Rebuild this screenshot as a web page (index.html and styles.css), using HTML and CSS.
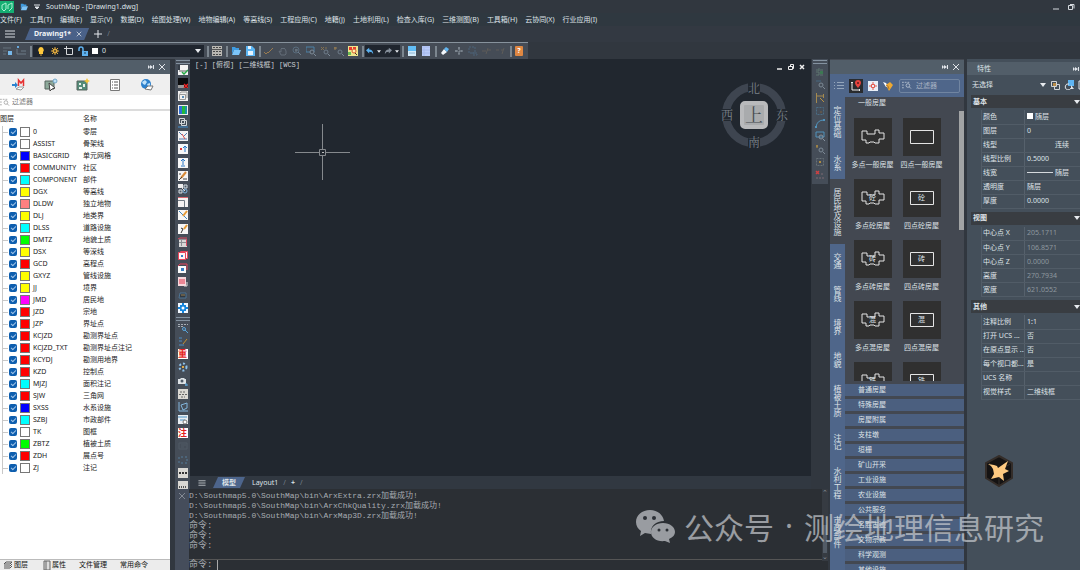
FILE: index.html
```html
<!DOCTYPE html>
<html lang="zh-CN">
<head>
<meta charset="utf-8">
<title>SouthMap - [Drawing1.dwg]</title>
<link rel="stylesheet" href="styles.css">
</head>
<body>
<svg class="defs" aria-hidden="true">
  <symbol id="folder" viewBox="0 0 10 10"><path d="M1 1h3l1 1h3v2H3L1 8z" fill="#3f9be0"/><path d="M3 4h7L8 9H1z" fill="#7cc4f8"/></symbol>
  <symbol id="down" viewBox="0 0 6 4"><path d="M0 0h6L3 4z" fill="#e8ebef"/></symbol>
  <symbol id="pin" viewBox="0 0 8 8"><path d="M1 2l2 2-2 2zM3 2l3 2-3 2zM6 2h1v4H6z" fill="#e3e7ec"/></symbol>
  <symbol id="cross" viewBox="0 0 8 8"><path d="M1 1l6 6M7 1L1 7" stroke="#dfe3e8" fill="none"/></symbol>
  <symbol id="bars" viewBox="0 0 10 8"><path d="M0 1h10M0 4h10M0 7h10" stroke="#d9dde2" fill="none"/></symbol>
  <symbol id="lens" viewBox="0 0 11 9"><path d="M0 1h9M0 4h3M0 7h3" stroke="currentColor" stroke-dasharray="2 1" fill="none"/><circle cx="6.500" cy="4.500" r="2" stroke="currentColor" fill="none"/><path d="M8 6l2 2" stroke="currentColor"/></symbol>
  <symbol id="multi" viewBox="0 0 24 16"><path d="M1 2h5v3h8V1h4v3h5v6h-5v4h-4l-1-1H9l-1 1H5v-3H1z" stroke="#e4e4e4" fill="none"/></symbol>
  <symbol id="quad" viewBox="0 0 24 16"><path d="M.5 1.500h23v13H.5z" stroke="#e4e4e4" fill="none"/></symbol>
</svg>
<div class="app">
  <header class="title">
    <svg class="logo" viewBox="0 0 14 12"><path d="M0 0h14v12H0z" fill="#14ae72"/><path d="M2 4l4-2v6l-2 2-2-2zM8 8V4l4-2v5l-3 3" fill="none" stroke="#a8f0d0"/></svg>
    <svg class="i10"><use href="#folder"/></svg>
    <svg class="more" viewBox="0 0 6 6"><path d="M0 1h6M1 3h4L3 5z" stroke="#dfe3e8" fill="#dfe3e8"/></svg>
    <span>SouthMap - [Drawing1.dwg]</span>
    <div class="frame">
      <button aria-label="最小化"><svg viewBox="0 0 8 8"><path d="M1 6h6" stroke="#d5d9de"/></svg></button>
      <button aria-label="还原"><svg viewBox="0 0 8 8"><path d="M1.500 2.500h4v4h-4zM3 1.500h4v4" stroke="#d5d9de" fill="none"/></svg></button>
    </div>
  </header>
  <nav class="menu">
    <button>文件(F)</button><button>工具(T)</button><button>编辑(E)</button><button>显示(V)</button><button>数据(D)</button><button>绘图处理(W)</button><button>地物编辑(A)</button><button>等高线(S)</button><button>工程应用(C)</button><button>地籍(J)</button><button>土地利用(L)</button><button>检查入库(G)</button><button>三维测图(B)</button><button>工具箱(H)</button><button>云协同(X)</button><button>行业应用(I)</button>
  </nav>
  <div class="docs">
    <button class="burger" aria-label="菜单"><svg class="i10"><use href="#bars"/></svg></button>
    <button class="doc">Drawing1*<svg viewBox="0 0 8 8" class="i6"><use href="#cross"/></svg></button>
    <button aria-label="新建"><svg class="i8" viewBox="0 0 8 8"><path d="M4 0v8M0 4h8" stroke="#e6e9ed"/></svg></button>
    <i class="slash">/</i>
  </div>
  <div class="tools">
    <button><svg viewBox="0 0 10 10"><path d="M1 2h8M1 5h4M1 8h3" stroke="#65717d"/><path d="M6 5h4v4H6z" fill="#77b8ea"/></svg></button>
    <button><svg viewBox="0 0 10 10"><path d="M1 3v5h9M5 5h5" stroke="#6d7a87" fill="none"/><path d="M1 0h2v2H1z" fill="#67a7dc"/></svg></button>
    <i class="sep"></i>
    <button class="layerbox">
      <svg viewBox="0 0 10 10"><path d="M5 1a3 3 0 0 1 2 5v2H3V6a3 3 0 0 1 2-5z" fill="#ffc93c"/><path d="M4 9h2" stroke="#c99a35"/></svg>
      <svg viewBox="0 0 10 10"><circle cx="5" cy="5" r="2.500" fill="#e3a52c"/><path d="M5 1v8M1 5h8M2 2l6 6M8 2L2 8" stroke="#d9a846"/><circle cx="5" cy="5" r="1" fill="#4a3c20"/></svg>
      <svg viewBox="0 0 10 10"><path d="M2.500 2.500h6v6h-6zM0 2.500h3M2.500 0v3" stroke="#d4d7da" fill="none"/></svg>
      <svg viewBox="0 0 10 10"><path d="M1 5V3q0-2 2-2t2 2v2" stroke="#5fb1ee" stroke-width="1.500" fill="none"/><path d="M4 5h6v5H4z" fill="#5fb1ee"/><path d="M7 6v2" stroke="#1c3c58"/></svg>
      <i class="white"></i><span>0</span><svg class="end"><use href="#down"/></svg>
    </button>
    <i class="sep"></i>
    <button><svg viewBox="0 0 10 10"><path d="M0 0h10v10H0z" fill="#b9b7b2"/><path d="M1 1.500h8M1 5.500h8M1 8.500h8" stroke="#484848" stroke-dasharray="2 1"/><path d="M0 3.500h10" stroke="#555"/></svg></button>
    <i class="sep"></i>
    <button><svg><use href="#folder"/></svg></button>
    <button><svg viewBox="0 0 10 10"><path d="M1 0h6l3 3v7H1z" fill="#5cb6f4"/><path d="M3 0h3v3H3zM3 5h5v4H3z" fill="#e6f4ff"/></svg></button>
    <i class="sep"></i>
    <button class="dim"><svg viewBox="0 0 10 10"><path d="M0 6l2 2 2-2M4 7l5-5" stroke="#d59b4b" fill="none"/></svg></button>
    <button class="dim"><svg viewBox="0 0 10 10"><path d="M3 9L1 5l2 1V3l1-1 1 1 1-1 1 1 1 2v3L7 9z" fill="none" stroke="#78838f"/></svg></button>
    <button class="dim"><svg viewBox="0 0 10 10"><circle cx="4" cy="4" r="3" fill="none" stroke="#668197"/><path d="M4 3v3M3 4h3M6 6l3 3" stroke="#8b9cac"/></svg></button>
    <button class="dim"><svg viewBox="0 0 10 10"><path d="M0 1h8v5H0z" fill="none" stroke="#52a4db"/><circle cx="6" cy="6" r="2" fill="#454c56" stroke="#a3b4c4"/><path d="M8 8l2 2" stroke="#a3b4c4"/></svg></button>
    <button class="dim"><svg viewBox="0 0 10 10"><path d="M1 1l3 3M4 1L1 4M5 2h2" stroke="#b08b4d"/><circle cx="6" cy="6" r="2" fill="none" stroke="#8b9cac"/><path d="M8 8l2 2" stroke="#a3b4c4"/></svg></button>
    <button class="dim"><svg viewBox="0 0 10 10"><path d="M0 2h3M1 1v3" stroke="#d9a44e"/><circle cx="6" cy="6" r="2" fill="none" stroke="#8b9cac"/><path d="M8 8l2 2" stroke="#a3b4c4"/></svg></button>
    <button><svg viewBox="0 0 10 10"><path d="M0 0h10v10H0z" fill="#eee58d"/><path d="M1 1h3v3H1zM5 1h3v3H5z" fill="#e83b2e"/><path d="M0 6h3v3H0z" fill="#69bd55"/><circle cx="6" cy="5" r="2" fill="#fff2b0" stroke="#d8602f"/><path d="M7 7l2 2" stroke="#4b3428"/></svg></button>
    <i class="sep"></i>
    <div class="undo">
      <svg viewBox="0 0 10 10"><path d="M4 1v2q5 0 5 6-1-3-5-3v2L0 4z" fill="#5ab0ee"/></svg><svg class="s4"><use href="#down"/></svg>
      <svg viewBox="0 0 10 10"><path d="M6 1v2Q1 3 1 9q1-3 5-3v2l4-4z" fill="#87919d"/></svg><svg class="s4"><use href="#down"/></svg>
    </div>
    <i class="sep"></i>
    <button><svg viewBox="0 0 10 10"><path d="M1 0h8v10H1z" fill="#d5ebf9"/><path d="M1 0h8v5H1z" fill="#62bdf5"/><path d="M2 7h6" stroke="#8eb8d8"/></svg></button>
    <button><svg viewBox="0 0 10 10"><path d="M1 0h8v10H1z" fill="#b9cbf8"/><path d="M1 1h8M3 2v8M1 4h8M1 7h8" stroke="#a5b8ec"/></svg></button>
    <i class="sep"></i>
    <button><svg viewBox="0 0 10 10"><path d="M3 9L1 7l3-4 3 3z" fill="#f2f6fa"/><path d="M4 3l2-2 3 2-2 3z" fill="#62b6f0"/></svg></button>
    <button><svg viewBox="0 0 10 10"><path d="M5 1v8M1 5h8M4 2h2M4 8h2M2 4v2M8 4v2" stroke="#8b959f" stroke-dasharray="3 1"/></svg></button>
    <button class="dim"><svg viewBox="0 0 10 10"><path d="M1 1h6v6H1zM4 7h5v2H5" stroke="#507390" stroke-dasharray="2 1" fill="none"/></svg></button>
    <button class="dim"><svg viewBox="0 0 10 10"><path d="M0 5h4M5 4h4M6 2L4 8" stroke="#6f675a" fill="none"/></svg></button>
    <button class="dim"><svg viewBox="0 0 10 10"><path d="M0 4h3M8 2L6 8M5 4h2" stroke="#6f675a" fill="none"/></svg></button>
    <i class="sep"></i>
    <button class="help"><b>?</b></button>
  </div>

  <main class="work">
    <section class="layers">
      <div class="bar"><button aria-label="固定"><svg class="i8"><use href="#pin"/></svg></button><button aria-label="关闭"><svg class="i8"><use href="#cross"/></svg></button></div>
      <div class="big">
        <button><svg viewBox="0 0 14 14"><path d="M0 6h3V4l3 3-3 3V8H0z" fill="#2b83cf"/><path d="M6.500 8V2l2.500 3 2.500-3v6" stroke="#e63232" stroke-width="1.500" fill="none"/><path d="M4 11l3-2h5l-3 3z" fill="#fff" stroke="#999"/></svg></button>
        <button><svg viewBox="0 0 14 14"><path d="M1 3h9v8H1z" fill="#8da99a" stroke="#56645e"/><path d="M5 5l6 5-3 1-2 2z" fill="#fff" stroke="#444"/><circle cx="11" cy="3" r="2" fill="#bfe0f5" stroke="#72a7c8"/></svg></button>
        <button><svg viewBox="0 0 14 14"><path d="M1 3h10v9H1z" fill="#548d79" stroke="#56645e"/><path d="M3 5h2v2H3zM3 9h3v2H3zM7 6h2v3H7z" fill="#e7efeb"/><path d="M11 0l1 2 2 1-2 1-1 2-1-2-2-1 2-1z" fill="#f5c53a"/></svg></button>
        <button><svg viewBox="0 0 14 14"><path d="M2.500 1.500h9v11h-9z" fill="#fff" stroke="#777"/><path d="M4 4h1M4 7h1M4 10h1M6 4h4M6 7h4M6 10h4" stroke="#555"/></svg></button>
        <button><svg viewBox="0 0 14 14"><circle cx="6" cy="6" r="5" fill="#2c80cc"/><path d="M2 4l3-2 2 2-2 3-2-1zM7 6l3-1v3H8z" fill="#bfe2fa"/><path d="M5 11l3-3h5l-2 4z" fill="#fff" stroke="#777"/></svg></button>
      </div>
      <label class="filter"><svg><use href="#lens"/></svg><input type="text" placeholder="过滤器" aria-label="过滤器"></label>
      <div class="tree">
        <table>
          <thead><tr><th>图层</th><th>名称</th></tr></thead>
          <tbody>
            <tr><td><label><input type="checkbox" checked><i class="sw w"></i>0</label></td><td>零层</td></tr>
            <tr><td><label><input type="checkbox" checked><i class="sw w"></i>ASSIST</label></td><td>骨架线</td></tr>
            <tr><td><label><input type="checkbox" checked><i class="sw b"></i>BASICGRID</label></td><td>单元网格</td></tr>
            <tr><td><label><input type="checkbox" checked><i class="sw r"></i>COMMUNITY</label></td><td>社区</td></tr>
            <tr><td><label><input type="checkbox" checked><i class="sw c"></i>COMPONENT</label></td><td>部件</td></tr>
            <tr><td><label><input type="checkbox" checked><i class="sw y"></i>DGX</label></td><td>等高线</td></tr>
            <tr><td><label><input type="checkbox" checked><i class="sw p"></i>DLDW</label></td><td>独立地物</td></tr>
            <tr><td><label><input type="checkbox" checked><i class="sw y"></i>DLJ</label></td><td>地类界</td></tr>
            <tr><td><label><input type="checkbox" checked><i class="sw c"></i>DLSS</label></td><td>道路设施</td></tr>
            <tr><td><label><input type="checkbox" checked><i class="sw g"></i>DMTZ</label></td><td>地貌土质</td></tr>
            <tr><td><label><input type="checkbox" checked><i class="sw y"></i>DSX</label></td><td>等深线</td></tr>
            <tr><td><label><input type="checkbox" checked><i class="sw r"></i>GCD</label></td><td>高程点</td></tr>
            <tr><td><label><input type="checkbox" checked><i class="sw y"></i>GXYZ</label></td><td>管线设施</td></tr>
            <tr><td><label><input type="checkbox" checked><i class="sw y"></i>JJ</label></td><td>境界</td></tr>
            <tr><td><label><input type="checkbox" checked><i class="sw m"></i>JMD</label></td><td>居民地</td></tr>
            <tr><td><label><input type="checkbox" checked><i class="sw r"></i>JZD</label></td><td>宗地</td></tr>
            <tr><td><label><input type="checkbox" checked><i class="sw r"></i>JZP</label></td><td>界址点</td></tr>
            <tr><td><label><input type="checkbox" checked><i class="sw r"></i>KCJZD</label></td><td>勘测界址点</td></tr>
            <tr><td><label><input type="checkbox" checked><i class="sw r"></i>KCJZD_TXT</label></td><td>勘测界址点注记</td></tr>
            <tr><td><label><input type="checkbox" checked><i class="sw r"></i>KCYDJ</label></td><td>勘测用地界</td></tr>
            <tr><td><label><input type="checkbox" checked><i class="sw r"></i>KZD</label></td><td>控制点</td></tr>
            <tr><td><label><input type="checkbox" checked><i class="sw c"></i>MJZJ</label></td><td>面积注记</td></tr>
            <tr><td><label><input type="checkbox" checked><i class="sw r"></i>SJW</label></td><td>三角网</td></tr>
            <tr><td><label><input type="checkbox" checked><i class="sw b"></i>SXSS</label></td><td>水系设施</td></tr>
            <tr><td><label><input type="checkbox" checked><i class="sw c"></i>SZBJ</label></td><td>市政部件</td></tr>
            <tr><td><label><input type="checkbox" checked><i class="sw w"></i>TK</label></td><td>图框</td></tr>
            <tr><td><label><input type="checkbox" checked><i class="sw g"></i>ZBTZ</label></td><td>植被土质</td></tr>
            <tr><td><label><input type="checkbox" checked><i class="sw r"></i>ZDH</label></td><td>展点号</td></tr>
            <tr><td><label><input type="checkbox" checked><i class="sw w"></i>ZJ</label></td><td>注记</td></tr>
          </tbody>
        </table>
      </div>
      <div class="foot">
        <button><svg viewBox="0 0 10 10"><path d="M3 2h6L7 4H1zM1 6h6l2-2M1 8h6l2-2" stroke="#555" fill="none"/></svg>图层</button>
        <button><svg viewBox="0 0 10 10"><path d="M3 1h6v9H3z" fill="#ddd" stroke="#666"/><path d="M5 1v9" stroke="#666"/></svg>属性</button>
        <button>文件管理</button><button>常用命令</button>
      </div>
    </section>

    <section class="center">
      <div class="upper">
        <div class="vbar">
          <i class="grip"></i>
          <div class="vset one">
            <button><svg viewBox="0 0 10 10"><path d="M0 0h10v10H0z" fill="#f4f4f4"/><path d="M0 0h2v5H0z" fill="#363e48"/><path d="M1 6h8" stroke="#666"/><path d="M4 7l2 2 4-4" stroke="#26a845" stroke-width="1.500" fill="none"/></svg></button>
            <button><svg viewBox="0 0 10 10"><path d="M0 0h10v10H0z" fill="#0c0d0f"/><path d="M0 7h6v3H0z" fill="#9a9a9a"/><path d="M6 6l4 4M10 6l-4 4" stroke="#ee2424" stroke-width="1.500"/></svg></button>
            <button><svg viewBox="0 0 10 10"><path d="M0 0h10v10H0z" fill="#f1f1f1"/><path d="M1.500 3.500h6v5h-6zM2 2.500L3 1h6v6" stroke="#999" fill="none"/><path d="M4 5h2v2H4z" fill="#5a8db6"/></svg></button>
            <button><svg viewBox="0 0 10 10"><path d="M0 0h10v10H0z" fill="#eee"/><path d="M1 1h3v8H1z" fill="#2f6ed5"/><path d="M4 1h3v8H4z" fill="#23b83b"/><path d="M7 1h2v8H7z" fill="#1794a7"/></svg></button>
            <button><svg viewBox="0 0 10 10"><path d="M1.500 .5h5v5h-5zM3.500 2.500h5v5h-5z" fill="none" stroke="#d4d7da"/><path d="M0 9h10" stroke="#438fd0"/></svg></button>
            <button><svg viewBox="0 0 10 10"><path d="M0 0h10v10H0z" fill="#f2f2f2"/><path d="M1 1l3 3M9 2L5 6M1 8h8" stroke="#5079af"/><path d="M4 3l3 5" stroke="#db4848"/></svg></button>
            <button><svg viewBox="0 0 10 10"><path d="M0 0h10v10H0z" fill="#f7f7f7"/><path d="M2 4h2v2H2z" fill="#e13737"/><path d="M7 2v6M5 4l2-2 2 2" stroke="#2979c8" fill="none"/></svg></button>
            <button><svg viewBox="0 0 10 10"><path d="M0 0h10v10H0z" fill="#f7f7f7"/><path d="M5 1v6M3 3l2-2 2 2M3 8h4" stroke="#2979c8" fill="none"/></svg></button>
            <button><svg viewBox="0 0 10 10"><path d="M0 0h10v10H0z" fill="#f4f4f4"/><path d="M3 7l5-6" stroke="#d78936" stroke-width="2"/><path d="M1 9l3-3M5 8h4M1 3h2" stroke="#444"/></svg></button>
            <button><svg viewBox="0 0 10 10"><path d="M0 0h5v4H0z" fill="#eee"/><path d="M1 6h3v3H1zM6 1h3v3H6z" stroke="#d5dbe0" fill="#4e5c69"/><circle cx="7" cy="7" r="2" stroke="#7eb3dd" fill="none"/><path d="M3 3l4 4" stroke="#ddd"/></svg></button>
            <button><svg viewBox="0 0 10 10"><path d="M0 0h10v10H0z" fill="#f6f2f2"/><path d="M0 .5h10" stroke="#db6770"/><path d="M0 3.500h6.500V10" stroke="#737b84" fill="none"/></svg></button>
            <button><svg viewBox="0 0 10 10"><path d="M0 0h10v10H0z" fill="#f6f6f6"/><path d="M1 1l8 8" stroke="#3d86bf"/><path d="M5 6l4-5" stroke="#e69a33" stroke-width="2"/></svg></button>
            <button><svg viewBox="0 0 10 10"><path d="M0 0h10v10H0z" fill="#f6f6f6"/><path d="M6 5l3-4" stroke="#e69a33" stroke-width="2"/><path d="M3 4l2 1-2 4" stroke="#333" fill="none"/></svg></button>
            <button><svg viewBox="0 0 10 10"><path d="M1 2h8v8H1z" fill="#d8d8d8"/><path d="M1 2.500h8M3.500 2v7M1 5.500h8" stroke="#8b8f94"/><path d="M0 2l2-1h7M8.500 2v7" stroke="#dd4c63" fill="none"/></svg></button>
            <button><svg viewBox="0 0 10 10"><path d="M2.500 1.500h7v7h-2" fill="#fff4f5" stroke="#e8455a"/><path d="M.5 2.500h7v7h-7z" fill="#fff4f5" stroke="#e8455a"/><path d="M3 5h2v2H3z" fill="#397fc4"/></svg></button>
            <button><svg viewBox="0 0 10 10"><path d="M0 3h8v7H0z" fill="#fafafa"/><path d="M0 3l2-2h7v6" fill="none" stroke="#e8455a"/><path d="M3 5h3v3H3z" fill="#397fc4"/></svg></button>
            <button><svg viewBox="0 0 10 10"><path d="M0 0h8v9H0z" fill="#f5d7dc"/><path d="M2 2v5M4 2v5M6 2v5" stroke="#e0364f"/><path d="M9 5v4H6" stroke="#ddd" fill="none"/></svg></button>
            <button class="dim"><svg viewBox="0 0 10 10"><path d="M2 3h6v5H1z" fill="#252b32" stroke="#5590bd"/><path d="M3 5h4" stroke="#d5a34b"/></svg></button>
            <button><svg viewBox="0 0 10 10"><path d="M0 0h10v10H0z" fill="#f2f8ff"/><path d="M4 0h2v2h2v2h2v2H8v2H6v2H4V8H2V6H0V4h2V2h2z" fill="#1686dd"/><circle cx="5" cy="5" r="1.500" fill="#fff"/></svg></button>
          </div>
          <i class="grip"></i>
          <div class="vset two">
            <button><svg viewBox="0 0 10 10"><path d="M0 1.500h10M0 3.500h6" stroke="#a7aeb6" stroke-dasharray="2 1"/><circle cx="6" cy="6" r="1.500" stroke="#58a6dd" fill="none"/><path d="M7 7l3 3" stroke="#58a6dd"/></svg></button>
            <button><svg viewBox="0 0 10 10"><path d="M1 2h3M1 5h3M1 9h5" stroke="#4f8dc2"/><path d="M5 8l4-5" stroke="#c6912d"/></svg></button>
            <button class="red">重</button>
            <button><svg viewBox="0 0 10 10"><circle cx="5" cy="5" r="3.500" stroke="#8fc1e9" stroke-width="2" stroke-dasharray="2 2" fill="none"/><path d="M4 4h2v2H4z" fill="#dda646"/></svg></button>
            <button><svg viewBox="0 0 10 10"><path d="M0 3h2l1-1h3l1 1h1v5H0z" fill="#dce1e5"/><circle cx="4" cy="5" r="1.500" fill="#4c5967"/><path d="M8 7v3M7 9h3" stroke="#5ca9df"/></svg></button>
            <button><svg viewBox="0 0 10 10"><path d="M0 0h10v10H0z" fill="#dad8d3"/><path d="M2 3h6M1 5.500h8M3 8h4" stroke="#666" stroke-dasharray="2 1"/></svg></button>
            <button><svg viewBox="0 0 10 10"><path d="M1 0v9h9M3 3l6-2v5L5 8z" stroke="#83b6dd" fill="none"/></svg></button>
            <button><svg viewBox="0 0 10 10"><path d="M0 0h10v9H0z" fill="#e9eef2"/><path d="M0 2h9M2 5h5" stroke="#4d92c5"/><circle cx="7" cy="7" r="2" fill="#fff" stroke="#777"/></svg></button>
            <button class="red">注</button>
            <button class="dim"><svg viewBox="0 0 10 10"><path d="M1 2h8v6H1zM3 4h5M3 6h3" stroke="#59636f" fill="none"/></svg></button>
            <button class="dim"><svg viewBox="0 0 10 10"><path d="M1 2v6h8V2z" stroke="#609bc4" stroke-dasharray="2 2" fill="none"/></svg></button>
            <button><svg viewBox="0 0 10 10"><path d="M0 0h10v10H0z" fill="#dad8d3"/><path d="M1 5h8" stroke="#333" stroke-width="2" stroke-dasharray="2 1"/></svg></button>
            <button><svg viewBox="0 0 10 10"><path d="M0 0h10v10H0z" fill="#dad8d3"/><path d="M1 6h8" stroke="#555" stroke-width="2" stroke-dasharray="1 1"/></svg></button>
          </div>
        </div>
        <div class="stage">
          <div class="canvas">
            <span class="view">[-] [俯视] [二维线框] [WCS]</span>
            <div class="win">
              <svg viewBox="0 0 8 8"><path d="M1 6h5" stroke="#eee" stroke-width="1.500"/></svg>
              <svg viewBox="0 0 8 8"><path d="M1.500 3.500h4v3h-4zM3.500 3V1.500h3v4H6" stroke="#eee" fill="none"/></svg>
              <svg viewBox="0 0 8 8"><path d="M2 2l4 4M6 2L2 6" stroke="#eee" stroke-width="1.500"/></svg>
            </div>
            <svg class="cursor" viewBox="0 0 56 56"><path d="M27.500 0v25M27.500 31v25M0 28.500h25M31 28.500h24M24.500 25.500h6v6h-6z" stroke="#85898d" fill="none"/><path d="M27 28h2v1h-2z" fill="#bbb"/></svg>
            <div class="compass"><span class="n">北</span><span class="w">西</span><b>上</b><span class="e">东</span><span class="s">南</span></div>
          </div>
          <div class="layouts">
            <button aria-label="布局"><svg class="i8" viewBox="0 0 10 8"><use href="#bars"/></svg></button>
            <button class="on">模型</button><button>Layout1</button><i>/</i><button><b>+</b></button><i>/</i>
          </div>
        </div>
        <div class="rbar">
          <div class="rset">
            <i class="grip"></i>
            <svg viewBox="0 0 10 10"><path d="M1 3h8M1 5h8M1 8h8M4 1v8" stroke="#668276" stroke-dasharray="3 1"/><path d="M5 4h3v3H5z" fill="#3c8353"/></svg>
            <svg viewBox="0 0 10 10"><path d="M1 1h5" stroke="#46708c"/><circle cx="6" cy="5" r="2" stroke="#8b98a5" fill="none"/><path d="M8 7l2 2" stroke="#8b98a5"/></svg>
            <svg viewBox="0 0 10 10"><path d="M1.500 0v10M1 3h8M8.500 1v4" stroke="#bd9a4e"/><path d="M5 5l4 4" stroke="#d5a33d"/></svg>
            <svg viewBox="0 0 10 10"><path d="M1.500 1.500h7v7h-7z" stroke="#4d7590" stroke-dasharray="2 1" fill="none"/><path d="M5 5h2v2H5z" fill="#66594a"/></svg>
            <svg viewBox="0 0 10 10"><path d="M1 9Q2 2 9 2" stroke="#54a4d4" fill="none"/><path d="M8 1h2v2H8zM0 8h2v2H0z" fill="#54a4d4"/></svg>
            <svg viewBox="0 0 10 10"><path d="M1 1h8v5H1z" stroke="#54a4d4" fill="none"/><circle cx="6" cy="6" r="2" stroke="#98a5b2" fill="none"/><path d="M8 8l2 2" stroke="#98a5b2"/></svg>
            <svg viewBox="0 0 10 10"><path d="M1 2h2M2 1v3" stroke="#d5a33d"/><circle cx="6" cy="6" r="2" stroke="#8b98a5" fill="none"/><path d="M8 8l2 2" stroke="#8b98a5"/></svg>
            <svg viewBox="0 0 10 10"><path d="M1.500 1.500h7v7h-7z" stroke="#707a7f" stroke-dasharray="2 1" fill="none"/><path d="M4 4h2v2H4z" fill="#c99b3b"/></svg>
            <svg viewBox="0 0 10 10"><path d="M1 1l3 3M4 1L1 4" stroke="#f03f3f" stroke-width="1.500"/><path d="M1 8h8M6 4h3" stroke="#8a727b" stroke-dasharray="2 1"/></svg>
          </div>
        </div>
      </div>
      <div class="cmd">
        <button class="x" aria-label="关闭"><svg class="i8"><use href="#cross"/></svg></button>
        <div class="log">
          <div class="lines"><p>D:\Southmap5.0\SouthMap\bin\ArxExtra.zrx加载成功!</p><p>D:\Southmap5.0\SouthMap\bin\ArxChkQuality.zrx加载成功!</p><p>D:\Southmap5.0\SouthMap\bin\ArxMap3D.zrx加载成功!</p><p class="cue">命令:</p><p class="cue">命令:</p><p class="cue">命令:</p></div>
          <label class="prompt">命令:<input type="text" aria-label="命令"></label>
        </div>
        <div class="scroll"><span>⌃</span><i></i><span>⌄</span></div>
      </div>
    </section>

    <section class="palette">
      <div class="bar"><button aria-label="固定"><svg class="i8"><use href="#pin"/></svg></button><button aria-label="关闭"><svg class="i8"><use href="#cross"/></svg></button></div>
      <div class="ptools">
        <button><svg viewBox="0 0 10 10"><path d="M0 1.500h1M0 4.500h1M0 7.500h1M3 1.500h7M3 4.500h7M3 7.500h7" stroke="#93a5bb"/></svg></button>
        <button class="dark"><svg viewBox="0 0 12 12"><path d="M2 2v8h8M1 3l1-1 1 1M9 9l1 1-1 1" stroke="#eee" fill="none"/><path d="M8 0a3 3 0 0 1 3 3q0 2-3 5-3-3-3-5a3 3 0 0 1 3-3z" fill="#e8433e"/><circle cx="8" cy="3" r="1" fill="#5a1b1b"/></svg></button>
        <button><svg viewBox="0 0 10 10"><path d="M0 0h10v10H0z" fill="#e9f0f8"/><path d="M3.500 3.500h3v3h-3z" stroke="#e25b50" fill="none"/><path d="M5 1v8M1 5h8" stroke="#e25b50" stroke-dasharray="2 4"/></svg></button>
        <button><svg viewBox="0 0 10 10"><path d="M0 1l3 1 2 3-2 1z" fill="#fff"/><path d="M3 4l4-3 3 3-4 6z" fill="#efa931"/><path d="M3 4l2 1 1 3" stroke="#b07a31" fill="none"/></svg></button>
        <label><svg><use href="#lens"/></svg><input type="text" placeholder="过滤器" aria-label="符号过滤器"></label>
      </div>
      <div class="pbody">
        <nav class="vtabs"><button>定位基础</button><button>水系</button><button class="on">居民地及设施</button><button>交通</button><button>管线</button><button>境界</button><button>地貌</button><button>植被土质</button><button>注记</button><button>水利工程</button><button>市政部件</button></nav>
        <div class="plist">
          <div class="symbols">
            <h2>一般房屋</h2>
            <div class="tiles">
              <button><span><svg><use href="#multi"/></svg></span>多点一般房屋</button><button><span><svg><use href="#quad"/></svg></span>四点一般房屋</button>
              <button><span><svg><use href="#multi"/></svg><em>砼</em></span>多点砼房屋</button><button><span><svg><use href="#quad"/></svg><em>砼</em></span>四点砼房屋</button>
              <button><span><svg><use href="#multi"/></svg><em>砖</em></span>多点砖房屋</button><button><span><svg><use href="#quad"/></svg><em>砖</em></span>四点砖房屋</button>
              <button><span><svg><use href="#multi"/></svg><em>混</em></span>多点混房屋</button><button><span><svg><use href="#quad"/></svg><em>混</em></span>四点混房屋</button>
              <button><span><svg><use href="#multi"/></svg><em>铁</em></span></button><button><span><svg><use href="#quad"/></svg><em>铁</em></span></button>
            </div>
            <i class="thumb"></i>
          </div>
          <div class="cats"><button>普通房屋</button><button>特殊房屋</button><button>房屋附属</button><button>支柱墩</button><button>垣栅</button><button>矿山开采</button><button>工业设施</button><button>农业设施</button><button>公共服务</button><button>名胜古迹</button><button>文物宗教</button><button>科学观测</button><button>其他设施</button></div>
        </div>
      </div>
    </section>

    <section class="props">
      <div class="bar"><span>特性</span><svg class="i8"><use href="#pin"/></svg></div>
      <div class="pick">
        <select aria-label="选择"><option>无选择</option></select><svg class="s6"><use href="#down"/></svg>
        <button><svg viewBox="0 0 10 10"><path d="M1.500 1.500h5v5h-5zM4.500 4.500h5v5h-5z" stroke="#d1d4d8" fill="none"/><path d="M3 3h3v3H3z" fill="#b88c48"/></svg></button>
        <button><svg viewBox="0 0 10 10"><path d="M4 0h6v6H4z" fill="#5fb5f3"/><path d="M5 4a3 3 0 1 0 2 4" stroke="#e1e4e8" fill="none"/><path d="M7 5l3 4H7z" fill="#e1e4e8"/></svg></button>
        <button><svg viewBox="0 0 10 10"><path d="M1 1h8v8H1z" stroke="#e1e4e8" fill="none"/></svg></button>
      </div>
      <h3>基本<svg class="s6"><use href="#down"/></svg></h3>
      <table><tr><th>颜色</th><td><i class="white"></i>随层</td></tr><tr><th>图层</th><td>0</td></tr><tr><th>线型</th><td class="far">连续</td></tr><tr><th>线型比例</th><td>0.5000</td></tr><tr><th>线宽</th><td><i class="line"></i>随层</td></tr><tr><th>透明度</th><td>随层</td></tr><tr><th>厚度</th><td>0.0000</td></tr></table>
      <h3>视图<svg class="s6"><use href="#down"/></svg></h3>
      <table class="ro"><tr><th>中心点 X</th><td>205.1711</td></tr><tr><th>中心点 Y</th><td>106.8571</td></tr><tr><th>中心点 Z</th><td>0.0000</td></tr><tr><th>高度</th><td>270.7934</td></tr><tr><th>宽度</th><td>621.0552</td></tr></table>
      <h3>其他<svg class="s6"><use href="#down"/></svg></h3>
      <table><tr><th>注释比例</th><td>1:1</td></tr><tr><th>打开 UCS ...</th><td>否</td></tr><tr><th>在原点显示 ...</th><td>否</td></tr><tr><th>每个视口都...</th><td>是</td></tr><tr><th>UCS 名称</th><td></td></tr><tr><th>视觉样式</th><td>二维线框</td></tr></table>
    </section>
  </main>

  <svg class="bird" viewBox="0 0 30 32"><path d="M15 1l13 7v15l-13 8-13-8V8z" fill="#151313" stroke="#342d29" stroke-width="2"/><path d="M15 16L5 8M15 16l11-7M15 16v14" stroke="#35302d"/><path d="M4 9l6 1 3 1 1 2 10-7-3 8 4 2-6 3 1 7-5-4-8 2 3-5-1-5-2-3z" fill="#fdc981"/></svg>
  <div class="mark">
    <svg viewBox="0 0 40 33"><path d="M14 0C6 0 0 5 0 12c0 4 2 7 5 9l-1 5 5-3 6 1c-1-8 5-13 13-13C27 5 22 0 14 0z" fill="#c8cbd0"/><path d="M27 13c-7 0-12 4-12 9 0 6 6 10 14 9l5 2-1-4c4-2 6-4 6-7 0-5-5-9-12-9z" fill="#c8cbd0"/><g fill="#2b3036"><circle cx="9" cy="8" r="2"/><circle cx="18" cy="8" r="2"/><circle cx="23" cy="20" r="1.500"/><circle cx="31" cy="20" r="1.500"/></g></svg>
    <span>公众号</span><span class="dot">·</span><span>测绘地理信息研究</span>
  </div>
</div>
</body>
</html>
```
FILE: styles.css
```css
* { box-sizing: border-box; }
body { margin: 0; background: #31373f; color: #dfe3e8; font: 7px/12px "Noto Sans", "Noto Sans CJK SC", sans-serif; }
button, input, select { margin: 0; padding: 0; border: 0; background: none; color: inherit; font: inherit; outline: 0; }
button { display: flex; align-items: center; justify-content: center; flex: none; white-space: nowrap; }
svg { display: block; flex: none; }
i, em { font-style: normal; }
h2, h3, p { margin: 0; font: inherit; }
table { border-collapse: collapse; table-layout: fixed; width: 100%; }
th, td { padding: 0; font-weight: 400; text-align: left; white-space: nowrap; overflow: hidden; }
.defs { position: absolute; width: 0; height: 0; }
.app { position: relative; display: flex; flex-direction: column; height: 100vh; overflow: hidden; }
.i10 { width: 10px; height: 8px; }
.i8 { width: 8px; height: 6px; }
.i6 { width: 6px; height: 6px; }
.s6 { width: 6px; height: 4px; }
.s4 { width: 4px; height: 3px; }
.white { width: 6px; height: 6px; background: #fff; flex: none; }
.dim { opacity: .6; }

.title { display: flex; align-items: center; height: 13px; gap: 5px; background: #31373f; }
.logo { width: 14px; height: 12px; }
.more { width: 6px; height: 6px; }
.title span { margin-left: 1px; }
.frame { display: flex; gap: 7px; margin-left: auto; padding-right: 5px; }
.frame svg { width: 8px; height: 8px; }
.menu { display: flex; gap: 8px; height: 13px; background: #2f3840; }
.docs { display: flex; align-items: center; height: 16px; gap: 5px; padding-left: 5px; background: #333942; }
.burger { margin-right: 5px; }
.doc { height: 12px; padding: 0 7px 0 9px; gap: 5px; font-weight: 700; background: #4a6188; color: #f1f3f6; clip-path: polygon(5px 0, 100% 0, calc(100% - 5px) 100%, 0 100%); }
.docs .slash { color: #77808a; }
.docs .i8 { height: 8px; }
.tools { display: flex; align-items: center; align-self: flex-start; height: 17px; gap: 4px; padding: 0 5px 0 2px; background: #454c56; border-top: 1px solid #87929c; }
.tools svg, .vset svg, .rset svg, .ptools button svg, .pick button svg { width: 10px; height: 10px; }
.tools .s4 { width: 4px; height: 3px; }
.sep { width: 2px; height: 11px; margin: 0 -1px 0 0; background: #7c868f; flex: none; }
.layerbox { justify-content: flex-start; width: 171px; height: 12px; margin: 0 -1px 0 -2px; padding: 0 3px; gap: 4px; background: #1f252e; }
.tools .layerbox .end { width: 6px; height: 4px; margin-left: auto; }
.undo { display: flex; align-items: center; height: 12px; margin: 0 -2px 0 -2px; padding: 0 1px; gap: 3px; background: #1f252e; }
.undo svg:first-child, .undo svg:nth-child(3) { width: 8px; height: 8px; }
.help { width: 8px; height: 10px; background: #df8742; color: #fff; border-radius: 1px; }

.work { display: flex; flex: 1; min-height: 0; background: #31373f; }
.bar { display: flex; align-items: center; justify-content: flex-end; flex: none; gap: 3px; height: 14px; padding: 0 4px; background: #525e69; }
.bar .i8 { height: 8px; }
.layers { display: flex; flex-direction: column; flex: none; width: 170px; padding-top: 1px; color: #222; }
.big { display: flex; height: 21px; flex: none; align-items: center; gap: 18px; padding-left: 12px; background: #efefef; }
.big svg { width: 14px; height: 14px; }
.filter { display: flex; align-items: center; flex: none; height: 14px; gap: 2px; background: #fff; color: #aaa; }
.filter svg { width: 10px; height: 9px; }
.filter input { flex: 1; width: 0; }
input::placeholder { color: #777; opacity: 1; }
.tree { flex: 1; min-height: 0; background: #fff; border-top: 2px solid #dcdcdc; overflow: hidden; }
.tree th { height: 15px; }
.tree th:first-child { width: 82px; }
.tree th + th, .tree td + td { padding-left: 1px; }
.tree td { height: 12px; line-height: 12px; }
.tree label { display: flex; align-items: center; height: 12px; margin-left: 2px; border-left: 1px solid #c8c8c8; }
.tree label::before { content: ""; width: 5px; margin-right: 1px; border-top: 1px solid #c8c8c8; }
.tree input { position: relative; appearance: none; width: 8px; height: 8px; border-radius: 2px; background: #0e5eae; }
.tree input::after { content: ""; position: absolute; left: 2px; top: 2px; width: 4px; height: 2px; border: solid #9fc2e5; border-width: 0 0 1px 1px; transform: rotate(-45deg); }
.sw { width: 10px; height: 10px; margin: 0 3px; border: 1px solid #777; flex: none; }
.w { background: #fff; } .b { background: #00f; } .r { background: #f00; } .c { background: #0ff; }
.y { background: #ff0; } .g { background: #0f0; } .m { background: #f0f; } .p { background: #ff8080; }
.foot { display: flex; align-items: center; flex: none; height: 11px; gap: 13px; padding-left: 3px; background: #ececec; border-top: 1px solid #bbb; color: #111; }
.foot svg { width: 10px; height: 10px; margin-right: 1px; }

.center { display: flex; flex-direction: column; flex: 1; min-width: 0; margin: 0 2px 0 5px; }
.upper { display: flex; flex: 1; min-height: 0; }
.vbar { display: flex; flex-direction: column; align-items: center; flex: none; width: 15px; padding-top: 1px; background: #454d58; overflow: hidden; }
.grip { width: 14px; height: 4px; flex: none; border: solid #8492a0; border-width: 1px 0; }
.vset { display: flex; flex-direction: column; flex: none; justify-content: space-between; }
.one { height: 248px; margin: 1px 0 4px; }
.two { height: 168px; margin-top: 2px; }
.red { width: 10px; height: 10px; background: #fff; color: #e51e1e; font-size: 9px; font-weight: 700; line-height: 10px; }
.stage { display: flex; flex-direction: column; flex: 1; min-width: 0; }
.canvas { position: relative; flex: 1; background: #21272f; }
.view { position: absolute; left: 5px; top: 0; color: #c9cdd2; font: 7px/12px "Liberation Mono", "Noto Sans CJK SC", monospace; }
.win { position: absolute; right: 5px; top: 4px; display: flex; gap: 3px; }
.win svg { width: 8px; height: 8px; }
.cursor { position: absolute; left: 105px; top: 65px; width: 56px; height: 56px; }
.compass { position: absolute; right: 25px; top: 24px; display: grid; place-items: center; width: 64px; height: 64px; border: 8px solid #3e4550; border-radius: 50%; color: #7c838b; font: 12px/12px "Noto Serif CJK SC", "Noto Sans CJK SC", serif; }
.compass span { position: absolute; background: #21272f; }
.compass .n { top: -9px; } .compass .s { bottom: -9px; } .compass .w { left: -9px; background: #21272f; } .compass .e { right: -10px; }
.compass b { width: 28px; height: 28px; border-radius: 5px; border: 4px solid #b9babc; background: #a9abad; color: #454a50; font: 18px/19px "Noto Serif CJK SC", "Noto Sans CJK SC", serif; text-align: center; }
.layouts { display: flex; align-items: center; flex: none; height: 13px; gap: 7px; padding-left: 8px; background: #313841; }
.layouts .on { height: 11px; padding: 0 9px; background: #4d658c; font-weight: 700; clip-path: polygon(5px 0, 100% 0, calc(100% - 5px) 100%, 0 100%); }
.layouts i { color: #77808a; margin: 0 -2px; }
.rbar { flex: none; width: 17px; padding: 0 0 0 1px; background: #31373f; }
.rset { display: flex; flex-direction: column; justify-content: space-between; align-items: center; height: 125px; padding: 1px 0 4px; background: #454d58; }
.rset svg { opacity: .8; }
.cmd { display: flex; flex: none; height: 81px; background: #2b2f34; }
.cmd .x { align-items: flex-start; width: 14px; padding-top: 3px; background: #454d5b; }
.cmd .x svg { opacity: .4; height: 8px; }
.log { display: flex; flex-direction: column; flex: 1; min-width: 0; color: #a7acb2; font: 8px/10px "Liberation Mono", "Noto Sans CJK SC", monospace; }
.lines { flex: 1; padding-top: 2px; }
.log p { white-space: nowrap; }
.log .cue, .prompt { font-size: 9px; }
.prompt { display: flex; height: 11px; gap: 5px; border-top: 1px solid #555; line-height: 10px; }
.prompt input { flex: 1; border-left: 1px solid #aaa; }
.scroll { display: flex; flex-direction: column; width: 6px; margin-bottom: 9px; align-items: center; color: #8a929b; background: #363b42; }
.scroll i { width: 4px; flex: 1; margin-top: 28px; background: #525b66; }
.scroll span { line-height: 8px; }

.palette { display: flex; flex-direction: column; flex: none; width: 134px; padding-top: 1px; background: #434851; }
.ptools { display: flex; align-items: center; flex: none; height: 23px; gap: 5px; padding: 0 4px; background: #4f668a; }
.ptools .dark { width: 14px; height: 14px; background: #292b2e; }
.ptools .dark svg { width: 12px; height: 12px; }
.ptools label { display: flex; align-items: center; flex: 1; min-width: 0; height: 14px; gap: 4px; padding-left: 2px; margin-left: 1px; border: 1px solid #7185a1; border-radius: 2px; color: #b3bfce; }
.ptools label svg { width: 10px; height: 9px; }
.ptools input { width: 0; flex: 1; }
.ptools input::placeholder { color: #a8b4c4; }
.pbody { display: flex; flex: 1; min-height: 0; }
.vtabs { display: flex; flex-direction: column; flex: none; width: 15px; background: #4f668a; }
.vtabs button { width: 15px; padding: 9px 0 8px; writing-mode: vertical-rl; font-size: 8px; line-height: 15px; }
.vtabs .on { background: #434851; }
.plist { display: flex; flex-direction: column; flex: 1; min-width: 0; }
.symbols { position: relative; flex: none; height: 284px; overflow: hidden; }
.symbols h2 { height: 21px; padding-left: 13px; line-height: 11px; }
.tiles { display: grid; grid-template-columns: 49px 49px; padding-left: 3px; }
.tiles button { flex-direction: column; justify-content: flex-start; height: 61px; line-height: 18px; }
.tiles span { position: relative; display: grid; place-items: center; width: 38px; height: 38px; background: #303030; }
.tiles svg { width: 24px; height: 16px; }
.tiles em { position: absolute; left: 0; right: 0; top: 10px; text-align: center; }
.thumb { position: absolute; right: 0; top: 14px; width: 5px; height: 119px; background: #a2a4a5; }
.cats { display: flex; flex-direction: column; gap: 3px; padding-top: 3px; }
.cats button { justify-content: flex-start; height: 12px; padding-left: 13px; background: #4b5f7f; }

.props { flex: none; width: 113px; margin-left: 3px; padding-top: 3px; background: #444f5a; }
.props .bar { justify-content: space-between; padding: 0 0 0 10px; height: 13px; }
.pick { display: flex; align-items: center; height: 20px; gap: 4px; padding-left: 5px; overflow: hidden; }
.pick select { appearance: none; flex: none; width: 64px; }
.props h3 { display: flex; align-items: center; justify-content: space-between; height: 13px; margin: 0 0 1px 4px; padding: 0 0 0 2px; background: #393d42; font-weight: 700; }
.props table { width: calc(100% - 14px); margin: 0 0 3px 14px; border-left: 1px solid #525d68; }
.props h3 + table { margin-top: 2px; }
.props th, .props td { height: 14px; border-bottom: 1px solid #515c67; line-height: 12px; }
.props th { width: 43px; padding-left: 1px; border-right: 1px solid #56616c; }
.props td { padding-left: 2px; }
.props td .white, .line { display: inline-block; margin-right: 2px; }
.line { width: 26px; height: 1px; background: #d5d9dd; vertical-align: 2px; }
.props .far { padding-left: 30px; }
.ro td { color: #8e979f; }

.bird { position: absolute; right: 66px; top: 455px; width: 30px; height: 32px; }
.mark { position: absolute; left: 636px; top: 508px; display: flex; align-items: center; height: 36px; color: #c8cbd0; font: 400 30px/36px "Noto Sans CJK SC", sans-serif; opacity: .7; white-space: nowrap; }
.mark svg { width: 40px; height: 33px; margin-right: 8px; }
.mark .dot { width: 30px; text-align: center; font-family: "Noto Sans", sans-serif; }
```
